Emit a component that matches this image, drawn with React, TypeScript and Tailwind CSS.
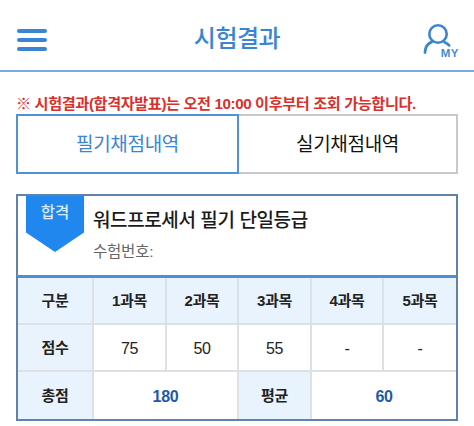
const font = '[font-family:"Liberation_Sans","Noto_Sans_CJK_KR",sans-serif]';

function UserIcon() {
  return (
    <svg width="36" height="36" viewBox="0 0 36 36" fill="none" className="text-[#3a85d2]">
      <circle cx="15" cy="12" r="8.7" stroke="currentColor" strokeWidth="2.6" />
      <path d="M2 30.5c0-4.8 2.6-8.8 6.8-10.6" stroke="currentColor" strokeWidth="2.8" strokeLinecap="round" />
      <path d="M21.5 20.2c1.9 0.7 3.5 1.8 4.7 3.2" stroke="currentColor" strokeWidth="2.6" strokeLinecap="round" />
    </svg>
  );
}

function Cell({ children, head, bold, blue, span, noRight, noBottom }: {
  children: React.ReactNode; head?: boolean; bold?: boolean; blue?: boolean; span?: boolean; noRight?: boolean; noBottom?: boolean;
}) {
  return (
    <div className={`flex items-center justify-center pt-[2px] border-[#dde1e6] ${noRight ? '' : 'border-r-2'} ${noBottom ? '' : 'border-b-2'} ${head ? 'bg-[#e9f3fd]' : 'bg-white'} ${span ? 'col-span-2' : ''} ${bold ? 'font-semibold text-[15px]' : 'text-[16px]'} ${blue ? 'text-[#1f5aa6] font-semibold' : 'text-[#222]'}`}>
      {children}
    </div>
  );
}

export default function App() {
  return (
    <div className={`w-[474px] h-[426px] bg-white overflow-hidden ${font}`}>
      {/* Header */}
      <header className="h-[72px] border-b-2 border-[#7fa9dc] flex items-center justify-between pl-[17px] pr-[15px]">
        <div className="w-[30px] mt-[10px] flex flex-col gap-[5px]">
          <span className="h-[4px] bg-[#3a85d2] rounded-full" />
          <span className="h-[4px] bg-[#3a85d2] rounded-full" />
          <span className="h-[4px] bg-[#3a85d2] rounded-full" />
        </div>
        <h1 className="ml-[4px] mt-[8px] text-[24px] leading-none tracking-[-0.5px] text-[#3a85d2] font-medium">시험결과</h1>
        <div className="relative w-[36px] h-[36px] mt-[10px]">
          <UserIcon />
          <span className="absolute right-0 bottom-[-1px] text-[11.5px] leading-none font-bold tracking-[0.5px] text-[#4a8cd0]">MY</span>
        </div>
      </header>

      <div className="px-[16px]">
        <p className="mt-[22px] text-[15.2px] leading-[20px] font-semibold tracking-[-0.4px] text-[#d9302c] whitespace-nowrap">
          ※ 시험결과(합격자발표)는 오전 10:00 이후부터 조회 가능합니다.
        </p>

        {/* Tabs */}
        <div className="flex h-[60px] text-[19px] tracking-[-0.3px]">
          <div className="w-[223px] pt-[3px] border-2 border-[#4e93d3] text-[#3a85d2] flex items-center justify-center">필기채점내역</div>
          <div className="flex-1 pt-[3px] border-2 border-l-0 border-[#c9c9c9] text-[#111] flex items-center justify-center">실기채점내역</div>
        </div>

        {/* Result card */}
        <div className="mt-[20px] h-[227px] border-2 border-[#5f84ab] flex flex-col">
          <div className="h-[82px] flex border-b-[3px] border-[#4a8fd8] shrink-0">
            <div className="ml-[8px] w-[58px] h-[56px] bg-[#1f87ee] [clip-path:polygon(0_0,100%_0,100%_65%,50%_100%,0_65%)] flex justify-center pt-[5px]">
              <span className="text-[15.5px] leading-[24px] text-[#d9ecff] font-medium">합격</span>
            </div>
            <div className="ml-[9px] pt-[11px]">
              <div className="text-[19px] leading-[28px] font-medium tracking-[-0.4px] text-[#1a1a1a]">워드프로세서 필기 단일등급</div>
              <div className="mt-[7px] text-[15.5px] leading-[20px] tracking-[-0.2px] text-[#666]">수험번호:</div>
            </div>
          </div>

          <div className="flex-1 grid grid-cols-[76px_73px_72px_73px_72px_1fr] grid-rows-3 tracking-[-0.3px]">
            <Cell head bold>구분</Cell>
            <Cell head bold>1과목</Cell>
            <Cell head bold>2과목</Cell>
            <Cell head bold>3과목</Cell>
            <Cell head bold>4과목</Cell>
            <Cell head bold noRight>5과목</Cell>

            <Cell head bold>점수</Cell>
            <Cell>75</Cell>
            <Cell>50</Cell>
            <Cell>55</Cell>
            <Cell>-</Cell>
            <Cell noRight>-</Cell>

            <Cell head bold noBottom>총점</Cell>
            <Cell blue span noBottom>180</Cell>
            <Cell head bold noBottom>평균</Cell>
            <Cell blue span noRight noBottom>60</Cell>
          </div>
        </div>
      </div>
    </div>
  );
}
